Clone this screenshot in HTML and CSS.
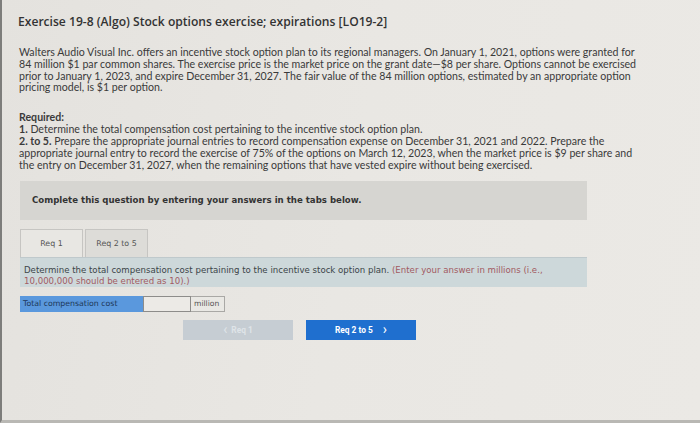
FILE: index.html
```html
<!DOCTYPE html>
<html>
<head>
<meta charset="utf-8">
<link rel="stylesheet" href="styles.css">
</head>
<body>
<div class="page">
  <h1 class="title">Exercise 19-8 (Algo) Stock options exercise; expirations [LO19-2]</h1>
  <p class="para">Walters Audio Visual Inc. offers an incentive stock option plan to its regional managers. On January 1, 2021, options were granted for<br>84 million $1 par common shares. The exercise price is the market price on the grant date—$8 per share. Options cannot be exercised<br>prior to January 1, 2023, and expire December 31, 2027. The fair value of the 84 million options, estimated by an appropriate option<br>pricing model, is $1 per option.</p>
  <div class="req">
    <div class="req-head">Required:</div>
    <div><b>1.</b> Determine the total compensation cost pertaining to the incentive stock option plan.</div>
    <div><b>2. to 5.</b> Prepare the appropriate journal entries to record compensation expense on December 31, 2021 and 2022. Prepare the<br>appropriate journal entry to record the exercise of 75% of the options on March 12, 2023, when the market price is $9 per share and<br>the entry on December 31, 2027, when the remaining options that have vested expire without being exercised.</div>
  </div>
  <div class="complete">Complete this question by entering your answers in the tabs below.</div>
  <div class="tabs">
    <div class="tab active">Req 1</div>
    <div class="tab">Req 2 to 5</div>
  </div>
  <div class="panel">Determine the total compensation cost pertaining to the incentive stock option plan. <span class="hint">(Enter your answer in millions (i.e.,<br>10,000,000 should be entered as 10).)</span></div>
  <div class="row">
    <div class="label">Total compensation cost</div>
    <div class="input"></div>
    <div class="unit">million</div>
  </div>
  <div class="nav">
    <div class="btn prev"><span class="chev">&lsaquo;</span> Req 1</div>
    <div class="btn next">Req 2 to 5 <span class="chev">&rsaquo;</span></div>
  </div>
</div>
</body>
</html>
```
FILE: styles.css
```css
html, body {
  margin: 0;
  padding: 0;
}
body {
  width: 700px;
  height: 423px;
  box-sizing: border-box;
  background: linear-gradient(100deg, #e4e2de 0%, #e9e7e3 50%, #ebe9e5 100%);
  border-left: 2px solid #7d7d7b;
  border-bottom: 3px solid #b9b8b4;
  font-family: "Lato", "Open Sans", sans-serif;
  color: #3a3a3a;
  overflow: hidden;
}
.page {
  padding: 14px 0 0 16px;
  width: 660px;
}
.title {
  margin: 0;
  font-family: "Open Sans", sans-serif;
  font-weight: 600;
  font-size: 12.1px;
  line-height: 16px;
  color: #333;
}
.para {
  margin: 17px 0 0 1px;
  font-size: 10.6px;
  line-height: 11.8px;
  white-space: nowrap;
}
.req {
  margin: 17px 0 0 1px;
  font-size: 10.6px;
  line-height: 12px;
  white-space: nowrap;
}
.req-head, .req b {
  font-weight: 700;
}
.complete {
  margin: 10px 0 0 2px;
  width: 567px;
  height: 39px;
  box-sizing: border-box;
  background: #d6d5d1;
  padding: 14px 0 0 12px;
  font-family: "DejaVu Sans", sans-serif;
  font-weight: 700;
  font-size: 8.6px;
  color: #333;
}
.tabs {
  display: flex;
  gap: 2px;
  margin: 9px 0 0 2px;
}
.tab {
  width: 63px;
  height: 28px;
  box-sizing: border-box;
  border: 1px solid #c6c5c2;
  border-bottom: none;
  background: #dddcd8;
  font-family: "DejaVu Sans", sans-serif;
  font-size: 7.9px;
  color: #555;
  display: flex;
  align-items: center;
  justify-content: center;
}
.tab.active {
  background: #e8e7e3;
}
.panel {
  margin-left: 2px;
  width: 567px;
  height: 30px;
  box-sizing: border-box;
  background: #cdd8da;
  border-top: 1px solid #bfc9cc;
  padding: 7px 4px 0 4px;
  font-family: "DejaVu Sans", sans-serif;
  font-size: 8.6px;
  line-height: 11px;
  color: #3b4448;
  white-space: nowrap;
}
.hint {
  color: #a25a62;
}
.row {
  display: flex;
  margin: 9px 0 0 2px;
  height: 16px;
}
.label {
  width: 123px;
  background: #5a98dd;
  color: #1d3757;
  font-family: "DejaVu Sans", sans-serif;
  font-size: 7.8px;
  line-height: 16px;
  padding-left: 3px;
  box-sizing: border-box;
}
.input {
  width: 48px;
  box-sizing: border-box;
  border: 1px solid #8d8c8a;
  background: #eceae6;
}
.unit {
  width: 34px;
  box-sizing: border-box;
  border: 1px solid #a9a8a5;
  border-left: none;
  background: #e9e8e4;
  font-family: "DejaVu Sans", sans-serif;
  font-size: 7.6px;
  line-height: 14px;
  padding-left: 3px;
  color: #555;
}
.nav {
  display: flex;
  gap: 13px;
  margin: 8px 0 0 165px;
}
.btn {
  width: 110px;
  height: 20px;
  display: flex;
  align-items: center;
  justify-content: center;
  font-family: "Roboto", sans-serif;
  font-weight: 700;
  font-size: 8.4px;
  gap: 4px;
}
.btn .chev {
  font-size: 14px;
  font-weight: 400;
  line-height: 1;
  margin-top: -2px;
}
.prev {
  background: #c6cdd3;
  color: #dfe4e8;
}
.next {
  background: #1f6fcf;
  color: #fff;
}
.next .chev {
  margin-left: 6px;
}
```
